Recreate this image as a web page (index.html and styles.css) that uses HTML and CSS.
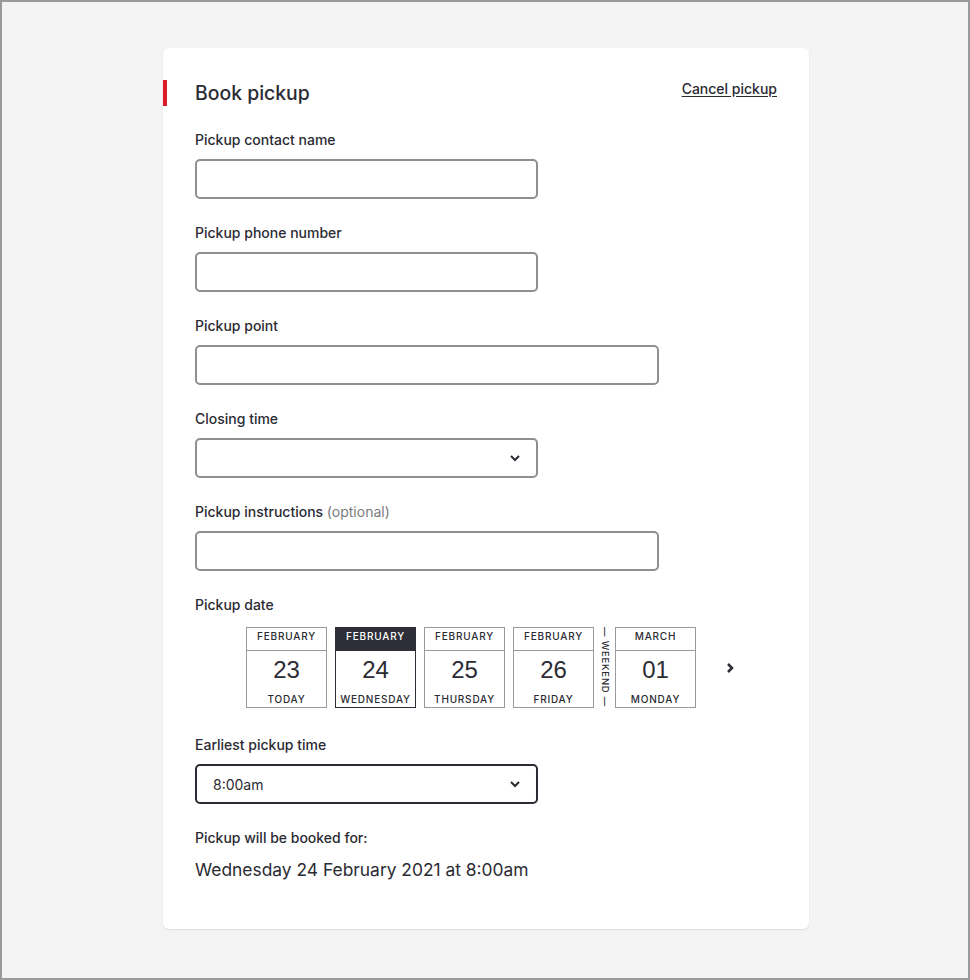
FILE: index.html
```html
<!DOCTYPE html>
<html lang="en">
<head>
<meta charset="utf-8">
<title>Book pickup</title>
<link rel="stylesheet" href="styles.css">
</head>
<body>
<div class="frame">
  <main class="card">
    <div class="card-head">
      <h1 class="title">Book pickup</h1>
      <a class="cancel" href="#">Cancel pickup</a>
    </div>

    <div class="field">
      <label class="label">Pickup contact name</label>
      <div class="input short"></div>
    </div>
    <div class="field">
      <label class="label">Pickup phone number</label>
      <div class="input short"></div>
    </div>
    <div class="field">
      <label class="label">Pickup point</label>
      <div class="input long"></div>
    </div>
    <div class="field">
      <label class="label">Closing time</label>
      <div class="input short select">
        <span class="value"></span>
        <svg class="chev" width="12" height="8" viewBox="0 0 12 8"><path d="M2 2l4 4 4-4" fill="none" stroke="#2b2b33" stroke-width="2"/></svg>
      </div>
    </div>
    <div class="field">
      <label class="label">Pickup instructions <span class="opt">(optional)</span></label>
      <div class="input long"></div>
    </div>
    <div class="field date-field">
      <label class="label">Pickup date</label>
      <div class="calendar">
        <div class="nav hidden"></div>
        <div class="days">
          <div class="day">
            <div class="month">FEBRUARY</div>
            <div class="num">23</div>
            <div class="dname">TODAY</div>
          </div>
          <div class="day selected">
            <div class="month">FEBRUARY</div>
            <div class="num">24</div>
            <div class="dname">WEDNESDAY</div>
          </div>
          <div class="day">
            <div class="month">FEBRUARY</div>
            <div class="num">25</div>
            <div class="dname">THURSDAY</div>
          </div>
          <div class="day">
            <div class="month">FEBRUARY</div>
            <div class="num">26</div>
            <div class="dname">FRIDAY</div>
          </div>
          <div class="weekend"><span>— WEEKEND —</span></div>
          <div class="day">
            <div class="month">MARCH</div>
            <div class="num">01</div>
            <div class="dname">MONDAY</div>
          </div>
        </div>
        <div class="nav next">
          <svg width="10" height="12" viewBox="0 0 10 12"><path d="M3 2l4 4-4 4" fill="none" stroke="#2b2b33" stroke-width="2.5"/></svg>
        </div>
      </div>
    </div>
    <div class="field">
      <label class="label">Earliest pickup time</label>
      <div class="input short select active">
        <span class="value">8:00am</span>
        <svg class="chev" width="12" height="8" viewBox="0 0 12 8"><path d="M2 2l4 4 4-4" fill="none" stroke="#2b2b33" stroke-width="2"/></svg>
      </div>
    </div>
    <div class="summary">
      <div class="label">Pickup will be booked for:</div>
      <p class="booked">Wednesday 24 February 2021 at 8:00am</p>
    </div>
  </main>
</div>
</body>
</html>
```

FILE: styles.css
```css
* { box-sizing: border-box; }
html, body { margin: 0; padding: 0; }
body {
  font-family: "Inter", "Noto Sans", sans-serif;
  color: #2b2b33;
  background: #f4f4f4;
}
.frame {
  width: 970px;
  height: 980px;
  border: 2px solid #9a9a9a;
  background: #f4f4f4;
  padding-top: 46px;
  padding-left: 161px;
}
.card {
  width: 646px;
  height: 881px;
  background: #fff;
  border-radius: 6px;
  box-shadow: 0 1px 2px rgba(0,0,0,0.10);
  padding: 33px 32px 0 32px;
}
.card-head {
  display: flex;
  justify-content: space-between;
  align-items: flex-start;
  margin-left: -32px;
  margin-bottom: 23px;
}
.title {
  margin: 0;
  font-size: 19.4px;
  line-height: 26px;
  font-weight: 500;
  border-left: 4px solid #dc1928;
  padding-left: 28px;
  position: relative;
  top: -1px;
}
.cancel {
  font-size: 14px;
  line-height: 20px;
  font-weight: 500;
  color: #2b2b33;
  text-decoration: underline;
  text-underline-offset: 2px;
  margin-top: -2px;
}
.field { margin-bottom: 24px; }
.label {
  display: block;
  font-size: 14px;
  line-height: 20px;
  font-weight: 500;
  margin-bottom: 9px;
}
.opt { font-weight: 400; color: #7a7a80; }
.input {
  height: 40px;
  border: 2px solid #8e8e93;
  border-radius: 5px;
  background: #fff;
}
.input.short { width: 343px; }
.input.long { width: 464px; }
.select {
  display: flex;
  align-items: center;
  justify-content: space-between;
  padding: 0 15px 0 16px;
}
.select.active { border-color: #2b2b33; }
.value { font-size: 14px; color: #2b2b33; }
.chev { display: block; }

.date-field { margin-bottom: 27px; }
.calendar {
  display: flex;
  align-items: center;
  gap: 9px;
  margin-top: 12px;
}
.nav {
  width: 42px;
  height: 40px;
  display: flex;
  align-items: center;
  justify-content: center;
}
.nav.next { margin-left: 4px; }
.nav.hidden { visibility: hidden; }
.days {
  display: flex;
  gap: 8px;
}
.day {
  width: 81px;
  height: 81px;
  border: 1px solid #9a9a9a;
  display: flex;
  flex-direction: column;
  font-family: "Liberation Sans", Arial, sans-serif;
  color: #2b2b33;
  text-align: center;
}
.month {
  height: 23px;
  line-height: 14px;
  padding-top: 1px;
  font-family: "Inter", "Liberation Sans", sans-serif;
  font-weight: 500;
  font-size: 10px;
  letter-spacing: 0.8px;
  border-bottom: 1px solid #9a9a9a;
}
.num {
  font-size: 24px;
  line-height: 28px;
  margin-top: 5px;
}
.dname {
  font-family: "Inter", "Liberation Sans", sans-serif;
  font-weight: 500;
  font-size: 10px;
  letter-spacing: 0.8px;
  margin-top: 9px;
}
.selected { border-color: #2e2e38; }
.selected .month {
  background: #2e2e38;
  color: #fff;
  border-bottom-color: #2e2e38;
}
.weekend {
  width: 14px;
  height: 81px;
  margin: 0 -5px 0 -4px;
  display: flex;
  align-items: center;
  justify-content: center;
  font-family: "Inter", "Liberation Sans", sans-serif;
  font-weight: 500;
  font-size: 9.5px;
  letter-spacing: 0.8px;
}
.weekend span {
  writing-mode: vertical-rl;
  white-space: nowrap;
}
.summary .label { margin-bottom: 9px; }
.booked {
  margin: 0;
  font-size: 17.4px;
  line-height: 26px;
  font-weight: 400;
}
```
